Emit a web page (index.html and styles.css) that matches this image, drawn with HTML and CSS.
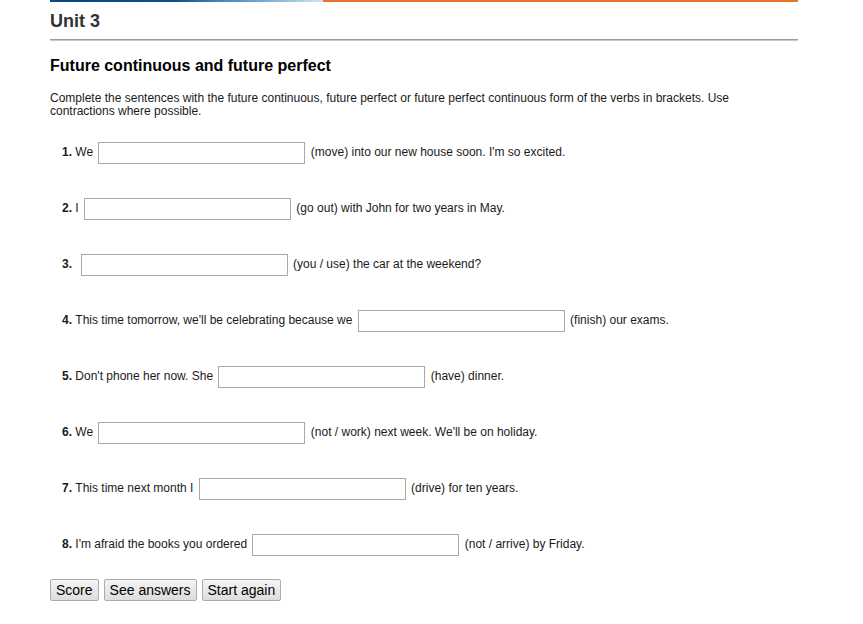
FILE: index.html
```html
<!DOCTYPE html>
<html lang="en">
<head>
    <meta charset="UTF-8"/>
    <title>Unit 3 - Future continuous and future perfect</title>
    <link rel="stylesheet" href="styles.css">
</head>
<body>
<div class="page">
    <!-- top banner -->
    <div class="banner">
        <div class="banner-blue"></div>
        <div class="banner-orange"></div>
    </div>

    <h1 class="unit">Unit 3</h1>
    <div class="rule"></div>

    <h2 class="title">Future continuous and future perfect</h2>
    <p class="intro">Complete the sentences with the future continuous, future perfect or future perfect continuous form of the verbs in brackets. Use contractions where possible.</p>

    <ol class="questions">
        <li class="question"><b>1.</b>&nbsp;We <input class="gap" type="text"> (move) into our new house soon. I'm so excited.</li>
        <li class="question"><b>2.</b>&nbsp;I <input class="gap" type="text"> (go out) with John for two years in May.</li>
        <li class="question"><b>3.</b>&nbsp; <input class="gap" type="text"> (you / use) the car at the weekend?</li>
        <li class="question"><b>4.</b>&nbsp;This time tomorrow, we'll be celebrating because we <input class="gap" type="text"> (finish) our exams.</li>
        <li class="question"><b>5.</b>&nbsp;Don't phone her now. She <input class="gap" type="text"> (have) dinner.</li>
        <li class="question"><b>6.</b>&nbsp;We <input class="gap" type="text"> (not / work) next week. We'll be on holiday.</li>
        <li class="question"><b>7.</b>&nbsp;This time next month I <input class="gap" type="text"> (drive) for ten years.</li>
        <li class="question"><b>8.</b>&nbsp;I'm afraid the books you ordered <input class="gap" type="text"> (not / arrive) by Friday.</li>
    </ol>

    <div class="buttons">
        <button class="button">Score</button>
        <button class="button">See answers</button>
        <button class="button">Start again</button>
    </div>
</div>
</body>
</html>
```

FILE: styles.css
```css
body {
    font-family: "Liberation Sans", Arial, sans-serif;
    margin: 0;
    background-color: #fff;
    color: #1a1a1a;
}

.page {
    margin-left: 50px;
    width: 748px;
}

.banner {
    display: flex;
    height: 2px;
}

.banner-blue {
    width: 273px;
    background: linear-gradient(to right, #0b4687 0%, #0d4b8c 45%, #3f7fb8 60%, #7eb0d6 80%, #cfe3f2 100%);
}

.banner-orange {
    flex: 1;
    background-color: #e57428;
}

.unit {
    font-size: 18px;
    font-weight: bold;
    line-height: 24px;
    margin: 7px 0 0;
    color: #333;
}

.rule {
    height: 2px;
    margin-top: 6px;
    background: linear-gradient(#9a9a9a 50%, #c8c8c8 50%);
}

.title {
    font-size: 16px;
    font-weight: bold;
    line-height: 20px;
    margin: 15px 0 0;
    color: #000;
}

.intro {
    font-size: 12px;
    line-height: 13px;
    margin: 16px 0 0;
    max-width: 710px;
}

.questions {
    list-style: none;
    margin: 23px 0 0;
    padding: 0 0 0 12px;
    display: flex;
    flex-direction: column;
    gap: 34px;
    font-size: 12px;
}

.question {
    height: 22px;
    line-height: 22px;
    white-space: nowrap;
}

.question b {
    font-weight: bold;
}

.gap {
    box-sizing: border-box;
    width: 207px;
    height: 22px;
    margin: 0 2px;
    padding: 0 3px;
    border: 1px solid #a9a9a9;
    background: #fff;
    vertical-align: middle;
    font-size: 12px;
}

.buttons {
    display: flex;
    gap: 5px;
    margin-top: 24px;
}

.button {
    font-family: "Liberation Sans", Arial, sans-serif;
    font-size: 14px;
    height: 22px;
    line-height: 20px;
    padding: 0 5px;
    border: 1px solid #acacac;
    border-radius: 2px;
    background: linear-gradient(#f4f4f4, #dddddd);
    color: #000;
    cursor: pointer;
}

.button:hover {
    background: linear-gradient(#eaf3fb, #d6e8f7);
}
```
